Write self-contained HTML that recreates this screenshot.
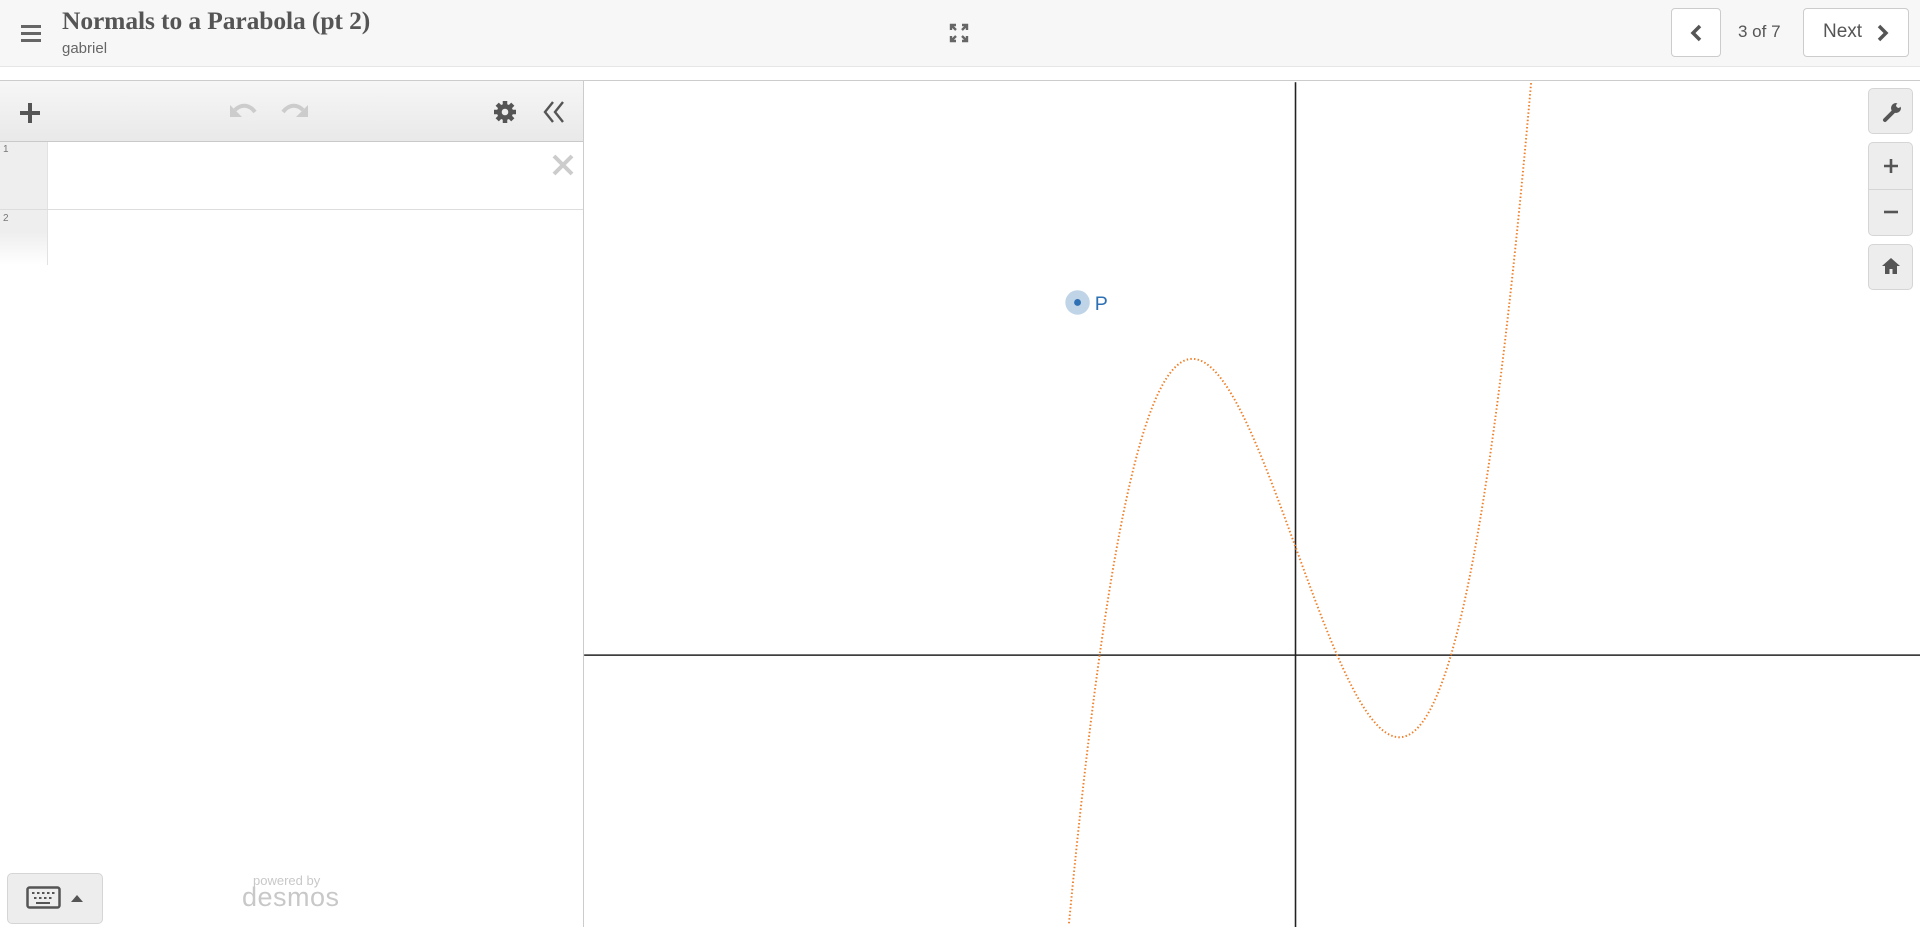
<!DOCTYPE html>
<html><head><meta charset="utf-8"><style>
*{box-sizing:border-box;margin:0;padding:0}
body{width:1920px;height:927px;overflow:hidden;background:#fff;font-family:"Liberation Sans",sans-serif;position:relative}
.hdr{position:absolute;left:0;top:0;width:1920px;height:67px;background:#f7f7f7;border-bottom:1px solid #e6e6e6}
.title{position:absolute;left:62px;top:6px;font-family:"Liberation Serif",serif;font-size:25.5px;color:#555;font-weight:bold;letter-spacing:-0.1px}
.user{position:absolute;left:62px;top:40px;font-size:15px;color:#666}
.btn{position:absolute;background:#fff;border:1px solid #ccc;border-radius:4px}
.panel{position:absolute;left:0;top:80px;width:584px;height:847px;border-right:1px solid #ccc;border-top:1px solid #ccc;background:#fff}
.tb{position:absolute;left:0;top:0;width:583px;height:61px;background:linear-gradient(#f6f6f6,#e9e9e9);border-bottom:1px solid #c9c9c9}
.gut{position:absolute;left:0;width:48px;background:#eee;border-right:1px solid #e2e2e2}
.num{position:absolute;left:3px;font-size:10px;color:#777}
.gb{position:absolute;left:1868px;width:45px;background:#ededed;border:1px solid #d5d5d5;border-radius:5px}
</style></head><body>
<div class="hdr">
 <svg style="position:absolute;left:21px;top:25px" width="20" height="17"><rect y="0" width="20" height="3" fill="#666"/><rect y="7" width="20" height="3" fill="#666"/><rect y="14" width="20" height="3" fill="#666"/></svg>
 <div class="title">Normals to a Parabola (pt 2)</div>
 <div class="user">gabriel</div>
 <svg style="position:absolute;left:949px;top:23px" width="20" height="20" fill="none" stroke="#666" stroke-width="2.4"><path d="M2 7V2h5M2 2l5 5M18 7V2h-5M18 2l-5 5M2 13v5h5M2 18l5-5M18 13v5h-5M18 18l-5-5"/></svg>
 <div class="btn" style="left:1671px;top:8px;width:50px;height:49px"><svg style="position:absolute;left:17px;top:15px" width="14" height="18"><path d="M11 2L4 9l7 7" fill="none" stroke="#555" stroke-width="3.5"/></svg></div>
 <div style="position:absolute;left:1738px;top:22px;font-size:17px;color:#555">3 of 7</div>
 <div class="btn" style="left:1803px;top:8px;width:106px;height:49px"><span style="position:absolute;left:19px;top:12px;font-size:19px;color:#555">Next</span><svg style="position:absolute;left:72px;top:15px" width="14" height="18"><path d="M3 2l7 7-7 7" fill="none" stroke="#555" stroke-width="3.5"/></svg></div>
</div>
<div style="position:absolute;left:0;top:80px;width:1920px;height:1px;background:#ccc"></div>
<svg style="position:absolute;left:0;top:0" width="1920" height="927" viewBox="0 0 1568 757">
 <defs><clipPath id="c"><rect x="477" y="67" width="1091" height="690"/></clipPath></defs>
 <g clip-path="url(#c)">
 <line x1="1058" y1="67" x2="1058" y2="757" stroke="#222" stroke-width="1.3"/>
 <line x1="477" y1="535" x2="1568" y2="535" stroke="#222" stroke-width="1.3"/>
 <path d="M873,754 C998.67,-558.6 1124.33,1499.9 1250,72 L1253,40" fill="none" stroke="#f0802a" stroke-width="1.6" stroke-dasharray="1.2 1.8"/>
 <circle cx="880" cy="247" r="10" fill="#2d70b3" fill-opacity="0.3"/>
 <circle cx="880" cy="247" r="2.8" fill="#2d70b3"/>
 <text x="894" y="253" font-family="Liberation Sans" font-size="16" fill="#2d70b3">P</text>
 </g>
</svg>
<div class="panel">
 <div class="tb">
  <svg style="position:absolute;left:19px;top:21px" width="22" height="22"><path d="M11 1v20M1 11h20" stroke="#555" stroke-width="4"/></svg>
  <svg style="position:absolute;left:229px;top:20px" width="32" height="20"><path d="M6 9c6-6 14-6 20 2" fill="none" stroke="#ccc" stroke-width="4"/><path d="M1 4v12h12z" fill="#ccc"/></svg>
  <svg style="position:absolute;left:277px;top:20px" width="32" height="20"><path d="M26 9c-6-6-14-6-20 2" fill="none" stroke="#ccc" stroke-width="4"/><path d="M31 4v12H19z" fill="#ccc"/></svg>
  <svg style="position:absolute;left:493px;top:19px" width="24" height="24" viewBox="0 0 24 24"><g fill="#555"><circle cx="12" cy="12" r="8"/><g stroke="#555" stroke-width="4.5"><path d="M12 1v22M1 12h22M4.2 4.2l15.6 15.6M19.8 4.2L4.2 19.8"/></g></g><circle cx="12" cy="12" r="3.3" fill="#eee"/></svg>
  <svg style="position:absolute;left:542px;top:19px" width="24" height="24" fill="none" stroke="#555" stroke-width="2.4"><path d="M11 2L3 12l8 10M21 2l-8 10 8 10"/></svg>
 </div>
 <div class="gut" style="top:61px;height:67px"></div>
 <div class="num" style="top:63px">1</div>
 <svg style="position:absolute;left:552px;top:73px" width="22" height="22"><path d="M2 2l18 18M20 2L2 20" stroke="#ccc" stroke-width="4"/></svg>
 <div style="position:absolute;left:0;top:128px;width:583px;height:1px;background:#ddd"></div>
 <div class="gut" style="top:129px;height:55px;background:linear-gradient(#eee 40%,#fff)"></div>
 <div class="num" style="top:132px">2</div>
 <div style="position:absolute;left:7px;top:792px;width:96px;height:51px;background:#ededed;border:1px solid #d5d5d5;border-radius:5px">
  <svg style="position:absolute;left:18px;top:12px" width="62" height="24"><rect x="1.5" y="1.5" width="32" height="20" rx="2" fill="none" stroke="#555" stroke-width="2.5"/><g fill="#555"><rect x="6" y="6" width="2.5" height="2"/><rect x="11" y="6" width="2.5" height="2"/><rect x="16" y="6" width="2.5" height="2"/><rect x="21" y="6" width="2.5" height="2"/><rect x="26" y="6" width="2.5" height="2"/><rect x="8" y="11" width="2.5" height="2"/><rect x="13" y="11" width="2.5" height="2"/><rect x="18" y="11" width="2.5" height="2"/><rect x="23" y="11" width="2.5" height="2"/><rect x="10" y="16" width="14" height="2"/><path d="M45 16l6-7 6 7z"/></g></svg>
 </div>
 <div style="position:absolute;left:253px;top:792px;font-size:13px;color:#c8c8c8">powered by</div>
 <div style="position:absolute;left:242px;top:801px;font-size:27px;color:#c8c8c8;letter-spacing:0.5px">desmos</div>
</div>
<div class="gb" style="top:88px;height:46px"><svg style="position:absolute;left:12px;top:12px" width="22" height="22"><path d="M4 19l9-9" stroke="#555" stroke-width="4" stroke-linecap="round"/><circle cx="15" cy="7" r="5" fill="#555"/><path d="M16 2l4 4-3 1-2-2z" fill="#ededed"/><circle cx="17.5" cy="4.5" r="2.2" fill="#ededed"/></svg></div>
<div class="gb" style="top:142px;height:94px"><div style="position:absolute;left:0;top:46px;width:43px;height:1px;background:#d5d5d5"></div>
 <svg style="position:absolute;left:14px;top:15px" width="16" height="16"><path d="M8 1v14M1 8h14" stroke="#555" stroke-width="2.6"/></svg>
 <svg style="position:absolute;left:14px;top:61px" width="16" height="16"><path d="M1 8h14" stroke="#555" stroke-width="2.6"/></svg></div>
<div class="gb" style="top:244px;height:46px"><svg style="position:absolute;left:12px;top:12px" width="20" height="18"><path d="M10 1L1 9h3v8h4.5v-5h3v5H16V9h3z" fill="#555"/></svg></div>
</body></html>
